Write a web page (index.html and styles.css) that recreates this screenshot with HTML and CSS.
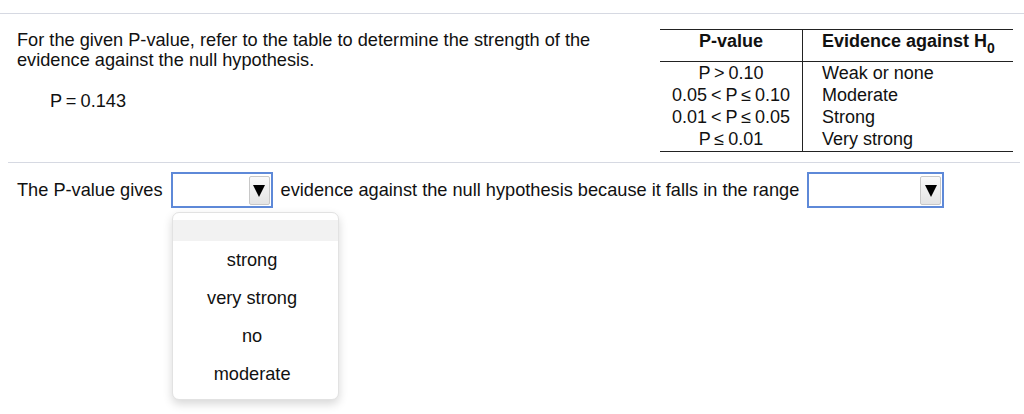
FILE: index.html
```html
<!DOCTYPE html>
<html>
<head>
<meta charset="utf-8">
<link rel="stylesheet" href="styles.css">
</head>
<body>
<div class="page">
  <div class="rule rule-top"></div>
  <div class="problem">
    <div class="prompt">
      <p class="intro">For the given P-value, refer to the table to determine the strength of the<br>evidence against the null hypothesis.</p>
      <p class="pval">P = 0.143</p>
    </div>
    <table class="evtable">
      <thead>
        <tr><th class="c1">P-value</th><th class="c2">Evidence against H<sub>0</sub></th></tr>
      </thead>
      <tbody>
        <tr><td class="c1">P &gt; 0.10</td><td class="c2">Weak or none</td></tr>
        <tr><td class="c1">0.05 &lt; P ≤ 0.10</td><td class="c2">Moderate</td></tr>
        <tr><td class="c1">0.01 &lt; P ≤ 0.05</td><td class="c2">Strong</td></tr>
        <tr class="last"><td class="c1">P ≤ 0.01</td><td class="c2">Very strong</td></tr>
      </tbody>
    </table>
  </div>
  <div class="rule rule-mid"></div>
  <div class="question">
    <span class="label">The P-value gives</span>
    <div class="select sel1">
      <span class="btn"><span class="tri"></span></span>
      <div class="menu">
        <div class="opt blank"></div>
        <div class="opt">strong</div>
        <div class="opt">very strong</div>
        <div class="opt">no</div>
        <div class="opt">moderate</div>
      </div>
    </div>
    <span class="label">evidence against the null hypothesis because it falls in the range</span>
    <div class="select sel2">
      <span class="btn"><span class="tri"></span></span>
    </div>
  </div>
</div>
</body>
</html>
```

FILE: styles.css
```css
html, body {
  margin: 0;
  padding: 0;
  background: #ffffff;
}
body {
  font-family: "Liberation Sans", Arial, sans-serif;
  font-size: 18.2px;
  color: #111;
}
.page {
  padding-top: 13px;
  width: 1024px;
  height: 414px;
  box-sizing: border-box;
  overflow: hidden;
}
.rule {
  height: 1px;
  background: #d6d9e2;
}
.rule-mid {
  margin: 0 4px 0 8px;
}
.problem {
  display: flex;
  justify-content: space-between;
  padding: 0 11px 0 17px;
  height: 148px;
}
.prompt {
  white-space: nowrap;
}
.prompt p {
  margin: 0;
  line-height: 20px;
}
.intro {
  padding-top: 16px;
}
.pval {
  padding-top: 21px;
  padding-left: 33px;
  word-spacing: -1px;
}
.evtable {
  margin-top: 15px;
  border-collapse: collapse;
  border-top: 1px solid #222;
  border-bottom: 1px solid #222;
  align-self: flex-start;
  white-space: nowrap;
}
.evtable th, .evtable td {
  padding: 0;
  font-size: 18px;
  color: #111;
}
.evtable .c1 {
  width: 142px;
  text-align: center;
  border-right: 1px solid #222;
  word-spacing: -1px;
}
.evtable .c2 {
  width: 191px;
  text-align: left;
  padding-left: 19px;
}
.evtable th {
  font-weight: bold;
  height: 30px;
  line-height: 20px;
  vertical-align: top;
  padding-top: 1px;
  border-bottom: 1px solid #222;
}
.evtable th sub {
  font-size: 14px;
  vertical-align: -6px;
  line-height: 0;
}
.evtable td {
  line-height: 22px;
}
.evtable tr.last td {
  padding-bottom: 1px;
}
.question {
  display: flex;
  align-items: center;
  padding-left: 17px;
  margin-top: 9px;
  height: 36px;
  white-space: nowrap;
}
.label {
  line-height: 20px;
}
.select {
  position: relative;
  box-sizing: border-box;
  height: 36px;
  border: 2px solid #5e89d8;
  background: #fff;
  display: flex;
  justify-content: flex-end;
  align-items: center;
  padding-right: 1px;
}
.sel1 {
  width: 102px;
  margin: 0 8px 0 8px;
}
.sel2 {
  width: 137px;
  margin-left: 8px;
}
.btn {
  box-sizing: border-box;
  width: 21px;
  height: 29px;
  border: 1px solid #c8c8c8;
  border-radius: 2px;
  background: linear-gradient(#fafafa, #e4e4e4);
  display: flex;
  align-items: center;
  justify-content: center;
}
.tri {
  width: 0;
  height: 0;
  border-left: 6px solid transparent;
  border-right: 6px solid transparent;
  border-top: 12px solid #000;
  margin-top: 1px;
}
.menu {
  position: absolute;
  top: 38px;
  left: -1px;
  width: 167px;
  height: 188px;
  box-sizing: border-box;
  background: #fff;
  border: 1px solid #e2e2e2;
  border-radius: 7px;
  box-shadow: 0 4px 10px rgba(0, 0, 0, 0.16);
  padding-top: 7px;
  z-index: 5;
}
.opt {
  line-height: 20px;
  height: 38px;
  display: flex;
  align-items: center;
  justify-content: center;
  padding-right: 6px;
  color: #111;
}
.opt.blank {
  height: 21px;
  background: #f2f2f2;
  padding-right: 0;
}
```
